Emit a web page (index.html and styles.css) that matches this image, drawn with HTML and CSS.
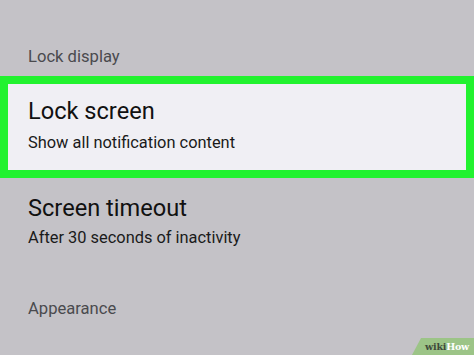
FILE: index.html
```html
<!DOCTYPE html>
<html lang="en">
<head>
<meta charset="utf-8">
<title>Lock display settings</title>
<link rel="stylesheet" href="styles.css">
</head>
<body>
<main class="settings">
  <h2 class="section-title section-title--first">Lock display</h2>
  <div class="item item--highlight">
    <div class="item-title">Lock screen</div>
    <div class="item-summary">Show all notification content</div>
  </div>
  <div class="item item--plain">
    <div class="item-title">Screen timeout</div>
    <div class="item-summary item-summary--tight">After 30 seconds of inactivity</div>
  </div>
  <h2 class="section-title section-title--second">Appearance</h2>
</main>
<div class="badge"><span class="badge-wiki">wiki</span><span class="badge-how">How</span></div>
</body>
</html>
```

FILE: styles.css
```css
html, body {
  margin: 0;
  padding: 0;
}
body {
  width: 474px;
  height: 355px;
  overflow: hidden;
  background: #c4c2c7;
  font-family: Roboto, "Noto Sans", sans-serif;
  position: relative;
}
.settings {
  display: flex;
  flex-direction: column;
}
.section-title {
  margin: 0;
  padding-left: 28px;
  font-size: 16.6px;
  line-height: 20px;
  font-weight: 400;
  color: #4a4a4e;
}
.section-title--first {
  padding-top: 47px;
  margin-bottom: 9px;
}
.section-title--second {
  margin-top: 51px;
}
.item {
  padding-left: 28px;
}
.item-title {
  font-size: 23.6px;
  line-height: 28px;
  color: #111;
}
.item-summary {
  margin-top: 8px;
  font-size: 16.4px;
  line-height: 20px;
  color: #1a1a1a;
}
.item-summary--tight {
  margin-top: 6px;
}
.item--highlight {
  border: 8px solid #22f22f;
  background: #f0eff4;
  padding: 13px 0 17px 20px;
}
.item--plain {
  padding-top: 16px;
}
.badge {
  position: absolute;
  right: 0;
  bottom: 0;
  width: 62px;
  height: 17px;
  box-sizing: border-box;
  padding-left: 13px;
  background: #9cc487;
  clip-path: polygon(9px 0, 100% 0, 100% 100%, 0 100%);
  font-family: "DejaVu Serif", serif;
  font-weight: bold;
  font-size: 9.5px;
  line-height: 18px;
  letter-spacing: -0.2px;
  white-space: nowrap;
}
.badge-wiki {
  color: #3f4a3a;
}
.badge-how {
  color: #fff;
}
```
